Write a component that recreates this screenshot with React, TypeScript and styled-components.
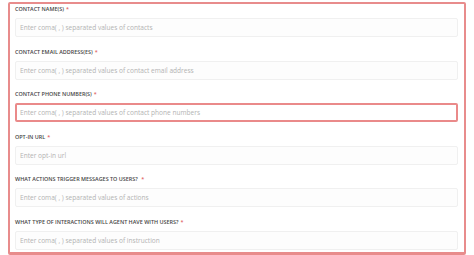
import React from "react";
import styled, { createGlobalStyle } from "styled-components";

const Global = createGlobalStyle`
  html, body { margin: 0; padding: 0; background: #ffffff; }
  body { font-family: "Open Sans", "Noto Sans", sans-serif; }
  * { box-sizing: border-box; }
`;

const Panel = styled.div`
  margin: 2px 0 0 8px;
  width: 458px;
  border: 2px solid #e88c8c;
  border-bottom-width: 3px;
  border-radius: 2px;
  padding: 0 6px 2px 5px;
  background: #ffffff;
`;

const Field = styled.div`
  display: flex;
  flex-direction: column;
  margin-bottom: 9.6px;
  &:last-child { margin-bottom: 0; }
`;

const Label = styled.label`
  font-family: "Open Sans", sans-serif;
  font-weight: 600;
  font-size: 5.45px;
  line-height: 10px;
  height: 10px;
  color: #454545;
  text-transform: uppercase;
  margin-bottom: 4px;
  white-space: nowrap;
`;

const Star = styled.span`
  color: #e05a5a;
  margin-left: 2px;
`;

const InputBox = styled.div<{ $error?: boolean }>`
  height: 19px;
  width: 100%;
  border-style: solid;
  border-width: ${(p) => (p.$error ? "2px" : "1px")};
  border-color: ${(p) => (p.$error ? "#ea8a8a" : "#f0f0f0")};
  border-radius: 2px;
  background: ${(p) => (p.$error ? "#ffffff" : "#fdfdfd")};
  padding: 0 ${(p) => (p.$error ? 0 : 1)}px;
  display: flex;
  align-items: center;
`;

const Input = styled.input`
  appearance: none;
  border: none;
  background: transparent;
  width: 100%;
  height: 100%;
  padding: 0 3px;
  font-family: "Open Sans", sans-serif;
  font-size: 6.55px;
  color: #333;
  outline: none;
  &::placeholder { color: #b3b3b3; }
`;

const fields = [
  { label: "Contact Name(s)", ph: "Enter coma( , ) separated values of contacts" },
  { label: "Contact Email Address(es)", ph: "Enter coma( , ) separated values of contact email address" },
  { label: "Contact Phone Number(s)", ph: "Enter coma( , ) separated values of contact phone numbers", error: true },
  { label: "Opt-in URL", ph: "Enter opt-in url" },
  { label: "What actions trigger messages to users? ", ph: "Enter coma( , ) separated values of actions" },
  { label: "What type of interactions will agent have with users?", ph: "Enter coma( , ) separated values of instruction" },
];

export default function App() {
  return (
    <>
      <Global />
      <Panel>
        {fields.map((f) => (
          <Field key={f.label}>
            <Label>
              {f.label}
              <Star>*</Star>
            </Label>
            <InputBox $error={f.error}>
              <Input placeholder={f.ph} />
            </InputBox>
          </Field>
        ))}
      </Panel>
    </>
  );
}
